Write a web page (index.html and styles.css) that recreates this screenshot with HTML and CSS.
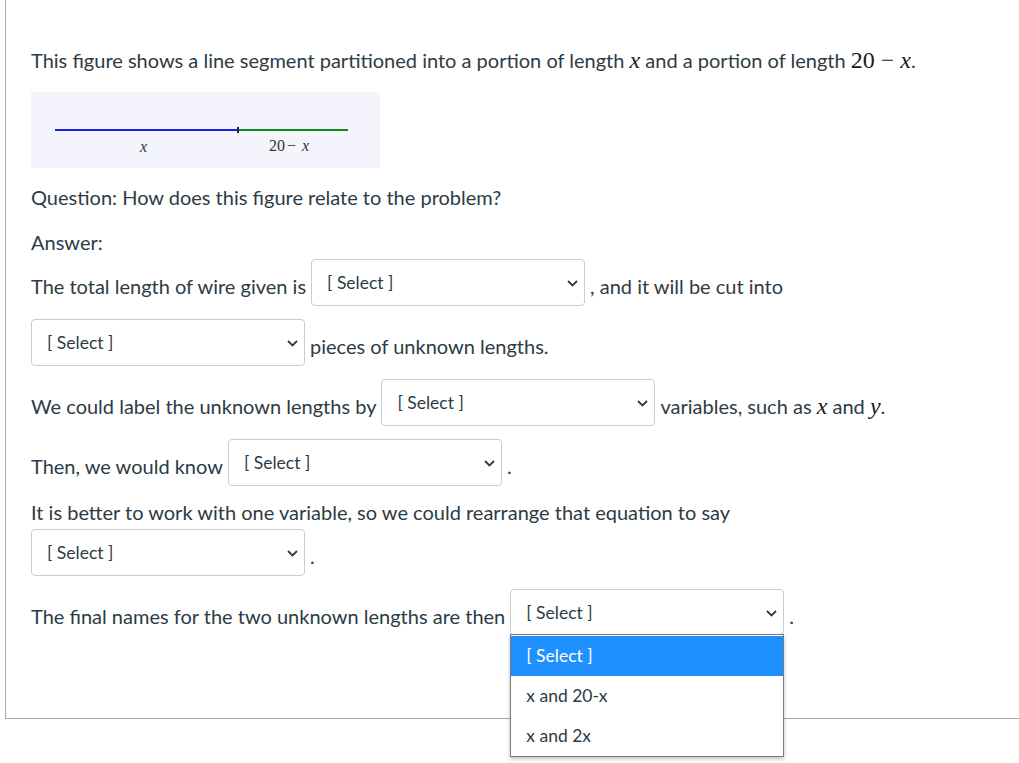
FILE: index.html
```html
<!DOCTYPE html>
<html lang="en">
<head>
<meta charset="utf-8">
<title>Quiz question</title>
<link rel="stylesheet" href="styles.css">
</head>
<body>
<div class="page">
  <div class="content">
    <p class="para first">This figure shows a line segment partitioned into a portion of length <span class="math">x</span> and a portion of length <span class="math up">20 − </span><span class="math">x</span>.</p>
    <div class="figure">
      <svg width="349" height="76" viewBox="0 0 349 76">
        <line x1="24" y1="38" x2="207" y2="38" stroke="#1c1cf0" stroke-width="2.2"/>
        <line x1="207" y1="38" x2="317" y2="38" stroke="#0c8a14" stroke-width="2.2"/>
        <line x1="207" y1="35" x2="207" y2="41" stroke="#1a2a3a" stroke-width="2"/>
        <text x="109" y="60" class="fig-label">x</text>
        <text x="238" y="59" class="fig-label num">20</text>
        <text x="256" y="59" class="fig-label num">−</text>
        <text x="271" y="59" class="fig-label">x</text>
      </svg>
    </div>
    <p class="para q">Question: How does this figure relate to the problem?</p>
    <p class="para a">Answer:</p>

    <div class="row r1">
      <span class="txt">The total length of wire given is</span>
      <div class="select"><span>[ Select ]</span><svg class="chev" width="11" height="7" viewBox="0 0 11 7"><path d="M1 1 L5.5 5.5 L10 1" fill="none" stroke="#2d3b45" stroke-width="1.8"/></svg></div>
      <span class="txt">, and it will be cut into</span>
    </div>

    <div class="row">
      <div class="select"><span>[ Select ]</span><svg class="chev" width="11" height="7" viewBox="0 0 11 7"><path d="M1 1 L5.5 5.5 L10 1" fill="none" stroke="#2d3b45" stroke-width="1.8"/></svg></div>
      <span class="txt">pieces of unknown lengths.</span>
    </div>

    <div class="row">
      <span class="txt">We could label the unknown lengths by</span>
      <div class="select"><span>[ Select ]</span><svg class="chev" width="11" height="7" viewBox="0 0 11 7"><path d="M1 1 L5.5 5.5 L10 1" fill="none" stroke="#2d3b45" stroke-width="1.8"/></svg></div>
      <span class="txt">variables, such as <span class="math">x</span> and <span class="math">y</span>.</span>
    </div>

    <div class="row">
      <span class="txt">Then, we would know</span>
      <div class="select"><span>[ Select ]</span><svg class="chev" width="11" height="7" viewBox="0 0 11 7"><path d="M1 1 L5.5 5.5 L10 1" fill="none" stroke="#2d3b45" stroke-width="1.8"/></svg></div>
      <span class="txt">.</span>
    </div>

    <p class="para better">It is better to work with one variable, so we could rearrange that equation to say</p>

    <div class="row r5">
      <div class="select"><span>[ Select ]</span><svg class="chev" width="11" height="7" viewBox="0 0 11 7"><path d="M1 1 L5.5 5.5 L10 1" fill="none" stroke="#2d3b45" stroke-width="1.8"/></svg></div>
      <span class="txt">.</span>
    </div>

    <div class="row r6">
      <span class="txt">The final names for the two unknown lengths are then</span>
      <div class="select-wrap">
        <div class="select open"><span>[ Select ]</span><svg class="chev" width="11" height="7" viewBox="0 0 11 7"><path d="M1 1 L5.5 5.5 L10 1" fill="none" stroke="#2d3b45" stroke-width="1.8"/></svg></div>
        <ul class="menu">
          <li class="opt selected">[ Select ]</li>
          <li class="opt">x and 20-x</li>
          <li class="opt">x and 2x</li>
        </ul>
      </div>
      <span class="txt">.</span>
    </div>
  </div>
</div>
</body>
</html>
```

FILE: styles.css
```css
html, body {
  margin: 0;
  padding: 0;
  background: #ffffff;
}
body {
  font-family: Lato, "Open Sans", "Liberation Sans", sans-serif;
  color: #2d3b45;
  font-size: 20px;
}
.page {
  padding-left: 5px;
  overflow: hidden;
  height: 763px;
}
.content {
  border-left: 1px solid #a8a8a8;
  border-bottom: 1px solid #a8a8a8;
  padding: 47px 0 83px 25px;
  margin-right: -20px;
}
.para {
  margin: 0;
  line-height: 27px;
  white-space: nowrap;
}
.math {
  font-family: "Liberation Serif", "DejaVu Serif", serif;
  font-style: italic;
  font-size: 1.2em;
  line-height: 1;
  color: #1a1a1a;
}
.math.up {
  font-style: normal;
}
.figure {
  margin-top: 18px;
  width: 349px;
  height: 76px;
  background: #f4f5fc;
}
.figure svg {
  display: block;
}
.fig-label {
  font-family: "Liberation Serif", "DejaVu Serif", serif;
  font-style: italic;
  font-size: 16px;
  fill: #333333;
}
.fig-label.num {
  font-style: normal;
}
.q {
  margin-top: 16px;
}
.a {
  margin-top: 18px;
}
.row {
  display: flex;
  align-items: flex-start;
  gap: 5px;
  height: 47px;
  margin-top: 13px;
}
.row.r1 {
  margin-top: 3px;
}
.row.r5 {
  margin-top: 3px;
}
.row.r6 {
  height: 46px;
}
.better {
  margin-top: 13px;
}
.txt {
  line-height: 39px;
  padding-top: 8px;
  white-space: nowrap;
}
.select {
  box-sizing: border-box;
  width: 274px;
  height: 47px;
  border: 1px solid #c7cdd1;
  border-radius: 4px;
  background: #ffffff;
  display: flex;
  align-items: flex-start;
  justify-content: space-between;
  padding: 11px 6px 0 15px;
  font-size: 17.5px;
  line-height: 24px;
  color: #2d3b45;
}
.select .chev {
  margin-top: 9px;
}
.select.open {
  height: 46px;
}
.select-wrap {
  position: relative;
}
.menu {
  position: absolute;
  left: 0;
  top: 45px;
  box-sizing: border-box;
  width: 274px;
  margin: 0;
  padding: 1px 0 0;
  list-style: none;
  background: #ffffff;
  border: 1px solid #7a7a7a;
  box-shadow: 0 2px 4px rgba(0, 0, 0, 0.25);
  z-index: 5;
}
.opt {
  height: 40px;
  line-height: 40px;
  padding-left: 15px;
  font-size: 17.5px;
  color: #2d3b45;
}
.opt.selected {
  background: #1e90ff;
  color: #ffffff;
}
```
